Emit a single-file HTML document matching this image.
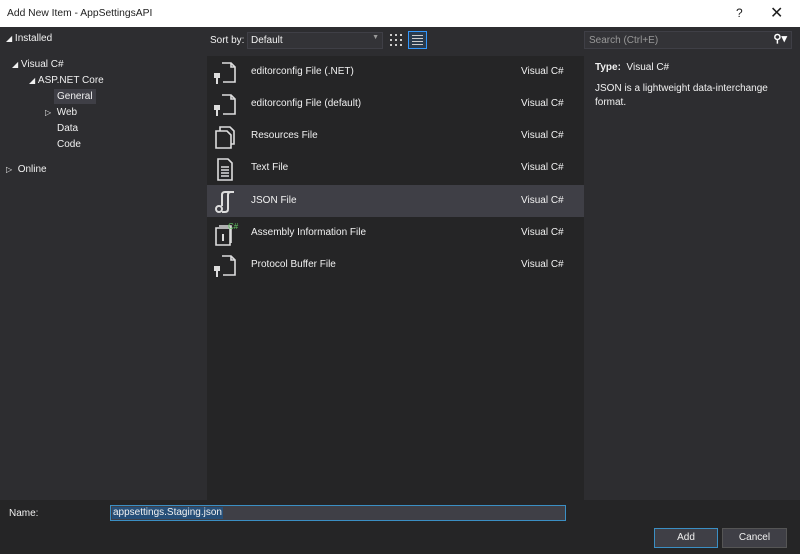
<!DOCTYPE html>
<html><head><style>
*{margin:0;padding:0;box-sizing:border-box}
body{width:800px;height:554px;overflow:hidden;background:#2d2d30;font-family:"Liberation Sans",sans-serif;font-size:10px;color:#f1f1f1;position:relative}
.abs{position:absolute}
.title{left:0;top:0;width:800px;height:27px;background:#fff;color:#1e1e1e;font-size:10.3px}
.tree div{position:absolute;white-space:nowrap}
.list{left:207px;top:56px;width:377px;height:444px;background:#252526}
.row{position:absolute;left:0;width:377px;height:32px}
.row .n{position:absolute;left:44px;top:10px}
.row .t{position:absolute;left:314px;top:10px}
.row svg{position:absolute;left:6px;top:4px}
.btn{background:#3f3f46;border:1px solid #555;text-align:center;line-height:18px;color:#f1f1f1}
</style></head><body>
<div class="abs title"><span class="abs" style="left:7px;top:8px">Add New Item - AppSettingsAPI</span><span class="abs" style="left:736px;top:6px;font-size:12px">?</span><span class="abs" style="left:770px;top:3px;font-size:16px">✕</span></div>
<div class="tree">
<div style="left:6px;top:33px"><span style="font-size:8px">◢</span>&nbsp;Installed</div>
<div style="left:12px;top:59px"><span style="font-size:8px">◢</span>&nbsp;Visual C#</div>
<div style="left:29px;top:75px"><span style="font-size:8px">◢</span>&nbsp;ASP.NET Core</div>
<div style="left:54px;top:89px;background:#3f3f46;padding:2px 3px">General</div>
<div style="left:45px;top:107px"><span style="font-size:8px">▷</span>&nbsp; Web</div>
<div style="left:57px;top:123px">Data</div>
<div style="left:57px;top:139px">Code</div>
<div style="left:6px;top:164px"><span style="font-size:8px">▷</span>&nbsp; Online</div>
</div>
<div class="abs" style="left:210px;top:35px">Sort by:</div>
<div class="abs" style="left:247px;top:32px;width:136px;height:17px;background:#333337;border:1px solid #3f3f46;padding:2px 3px">Default<span style="position:absolute;right:3px;top:1px;font-size:7px;color:#999">▼</span></div>
<div class="abs" style="left:390px;top:34px;width:12px;height:12px;background:repeating-linear-gradient(90deg,#ccc 0 2px,transparent 2px 5px);-webkit-mask:repeating-linear-gradient(#000 0 2px,transparent 2px 5px)"></div>
<div class="abs" style="left:408px;top:31px;width:19px;height:18px;border:1px solid #3399ff;background:#2a3b4d"><div style="margin:3px;height:10px;background:repeating-linear-gradient(#ccc 0 1px,transparent 1px 3px)"></div></div>
<div class="abs" style="left:584px;top:31px;width:208px;height:18px;background:#333337;border:1px solid #3f3f46;color:#999;padding:3px 4px">Search (Ctrl+E)<span style="position:absolute;right:4px;top:0;color:#fff;font-weight:bold;font-size:11px">⚲▾</span></div>
<div class="abs" style="left:595px;top:62px"><b>Type:</b>&nbsp; Visual C#</div>
<div class="abs" style="left:595px;top:82px;line-height:14px">JSON is a lightweight data-interchange<br>format.</div>
<div class="abs list">
<div class="row" style="top:0"><svg width="26" height="26" fill="none" stroke="#ddd" stroke-width="1.6"><path d="M9 3h9l4 4v15H10"/><path d="M18 3v4h4"/><path d="M4 13v11M2 13v4h4v-4" stroke-width="2"/></svg><span class="n">editorconfig File (.NET)</span><span class="t">Visual C#</span></div>
<div class="row" style="top:32px"><svg width="26" height="26" fill="none" stroke="#ddd" stroke-width="1.6"><path d="M9 3h9l4 4v15H10"/><path d="M18 3v4h4"/><path d="M4 13v11M2 13v4h4v-4" stroke-width="2"/></svg><span class="n">editorconfig File (default)</span><span class="t">Visual C#</span></div>
<div class="row" style="top:64px"><svg width="26" height="26" fill="none" stroke="#ddd" stroke-width="1.6"><path d="M3 7h11l4 4v13H3z"/><path d="M7 7V3h10l4 4v13h-3"/></svg><span class="n">Resources File</span><span class="t">Visual C#</span></div>
<div class="row" style="top:96px"><svg width="26" height="26" fill="none" stroke="#ddd" stroke-width="1.6"><path d="M5 3h10l4 4v17H5z"/><path d="M8 11h8M8 14h8M8 17h8M8 20h8"/></svg><span class="n">Text File</span><span class="t">Visual C#</span></div>
<div class="row" style="top:129px;background:#3f3f46"><svg width="26" height="26" fill="none" stroke="#ddd" stroke-width="2"><path d="M9 17V6q0-3 3-3h9M18 3q-3 0-3 3v14q0 3-3 3H9"/><circle cx="6" cy="20" r="3"/></svg><span class="n">JSON File</span><span class="t">Visual C#</span></div>
<div class="row" style="top:161px"><svg width="26" height="26" fill="none" stroke="#ddd" stroke-width="1.6"><path d="M3 7h14v17H3z"/><path d="M6 5h12v17"/><path d="M10 13v7" stroke-width="2"/><text x="15" y="8" fill="#6c6" stroke="none" font-size="8" font-family="Liberation Sans">C#</text></svg><span class="n">Assembly Information File</span><span class="t">Visual C#</span></div>
<div class="row" style="top:193px"><svg width="26" height="26" fill="none" stroke="#ddd" stroke-width="1.6"><path d="M9 3h9l4 4v15H10"/><path d="M18 3v4h4"/><path d="M4 13v11M2 13v4h4v-4" stroke-width="2"/></svg><span class="n">Protocol Buffer File</span><span class="t">Visual C#</span></div>
</div>
<div class="abs" style="left:0;top:500px;width:800px;height:54px;background:#252526"></div>
<div class="abs" style="left:9px;top:508px">Name:</div>
<div class="abs" style="left:110px;top:505px;width:456px;height:16px;background:#3f3f46;border:1px solid #3b8fc4"><span style="position:absolute;left:1px;top:1px;background:#264f78;padding:0 1px;line-height:12px">appsettings.Staging.json</span></div>
<div class="abs btn" style="left:654px;top:528px;width:64px;height:20px;border-color:#3b8fc4">Add</div>
<div class="abs btn" style="left:722px;top:528px;width:65px;height:20px">Cancel</div>
</body></html>
